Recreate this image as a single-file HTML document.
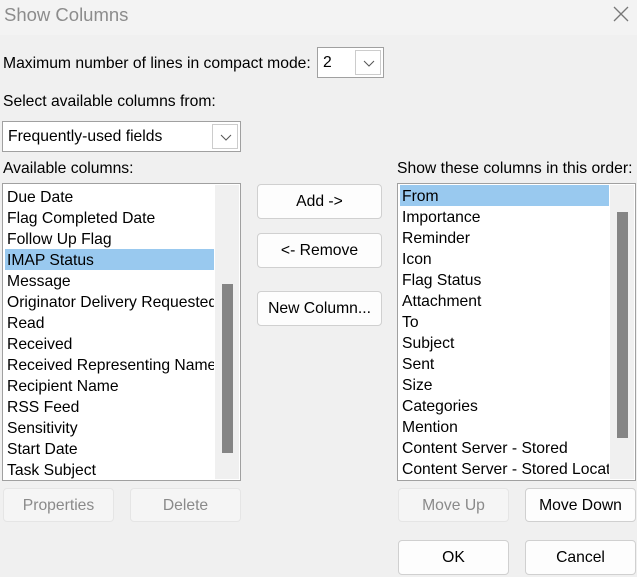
<!DOCTYPE html>
<html><head><style>
*{margin:0;padding:0;box-sizing:border-box}
body{width:637px;height:577px;background:#f0f0f0;font-family:"Liberation Sans",sans-serif;font-size:15.7px;color:#000;position:relative;overflow:hidden}
.a{position:absolute;white-space:nowrap}
.title{position:absolute;left:0;top:0;width:637px;height:35px;background:#f3f3f3}
.box{position:absolute;background:#fff;border:1px solid #a0a0a0}
.dd{position:absolute;top:2px;right:2px;bottom:2px;width:26px;border:1px solid #ccc;background:#fff}
.dd svg{position:absolute;left:7px;top:9px}
.btn{position:absolute;background:#fdfdfd;border:1px solid #d0d0d0;border-radius:4px;text-align:center;line-height:33px;font-size:15.7px}
.dis{background:#f5f5f5;color:#8a8a8a;border-color:#e5e5e5}
.row{position:absolute;left:2px;height:21px;line-height:23px;padding-left:2px;width:209px;overflow:hidden;white-space:nowrap}
.sel{background:#99c9ef}
.sb{position:absolute;top:1px;bottom:1px;width:24px;background:#f0f0f0}
.th{position:absolute;left:7px;width:11px;background:#858585}
</style></head><body>
<div class="title"></div>
<div class="a" style="left:4px;top:4px;font-size:18.5px;color:#8c8c8c">Show Columns</div>
<svg class="a" style="left:613px;top:6px" width="16" height="16"><path d="M1 1L15 15M15 1L1 15" stroke="#777" stroke-width="1.3"/></svg>

<div class="a" style="left:3px;top:55px">Maximum number of lines in compact mode:</div>
<div class="box" style="left:317px;top:47px;width:67px;height:31px"><span class="a" style="left:5px;top:6px">2</span><div class="dd"><svg width="12" height="8"><path d="M1 1L6 6L11 1" stroke="#555" fill="none"/></svg></div></div>

<div class="a" style="left:3px;top:93px">Select available columns from:</div>
<div class="box" style="left:2px;top:121px;width:239px;height:31px"><span class="a" style="left:5px;top:6px">Frequently-used fields</span><div class="dd"><svg width="12" height="8"><path d="M1 1L6 6L11 1" stroke="#555" fill="none"/></svg></div></div>

<div class="a" style="left:3px;top:160px">Available columns:</div>
<div class="a" style="left:397px;top:160px">Show these columns in this order:</div>

<div class="box" style="left:2px;top:183px;width:239px;height:298px;overflow:hidden">
<div class="row" style="top:2px">Due Date</div>
<div class="row" style="top:23px">Flag Completed Date</div>
<div class="row" style="top:44px">Follow Up Flag</div>
<div class="row sel" style="top:65px">IMAP Status</div>
<div class="row" style="top:86px">Message</div>
<div class="row" style="top:107px">Originator Delivery Requested</div>
<div class="row" style="top:128px">Read</div>
<div class="row" style="top:149px">Received</div>
<div class="row" style="top:170px">Received Representing Name</div>
<div class="row" style="top:191px">Recipient Name</div>
<div class="row" style="top:212px">RSS Feed</div>
<div class="row" style="top:233px">Sensitivity</div>
<div class="row" style="top:254px">Start Date</div>
<div class="row" style="top:275px">Task Subject</div>
<div class="sb" style="left:212px"><div class="th" style="top:99px;height:169px"></div></div>
</div>

<div class="box" style="left:397px;top:183px;width:239px;height:298px;overflow:hidden">
<div class="row sel" style="top:1px">From</div>
<div class="row" style="top:22px">Importance</div>
<div class="row" style="top:43px">Reminder</div>
<div class="row" style="top:64px">Icon</div>
<div class="row" style="top:85px">Flag Status</div>
<div class="row" style="top:106px">Attachment</div>
<div class="row" style="top:127px">To</div>
<div class="row" style="top:148px">Subject</div>
<div class="row" style="top:169px">Sent</div>
<div class="row" style="top:190px">Size</div>
<div class="row" style="top:211px">Categories</div>
<div class="row" style="top:232px">Mention</div>
<div class="row" style="top:253px">Content Server - Stored</div>
<div class="row" style="top:274px">Content Server - Stored Location</div>
<div class="sb" style="left:212px"><div class="th" style="top:27px;height:226px"></div></div>
</div>

<div class="btn" style="left:257px;top:184px;width:125px;height:35px">Add -&gt;</div>
<div class="btn" style="left:257px;top:233px;width:125px;height:35px">&lt;- Remove</div>
<div class="btn" style="left:257px;top:291px;width:125px;height:35px">New Column...</div>

<div class="btn dis" style="left:3px;top:488px;width:111px;height:34px">Properties</div>
<div class="btn dis" style="left:130px;top:488px;width:111px;height:34px">Delete</div>
<div class="btn dis" style="left:398px;top:488px;width:111px;height:34px">Move Up</div>
<div class="btn" style="left:525px;top:488px;width:111px;height:34px">Move Down</div>
<div class="btn" style="left:398px;top:540px;width:111px;height:35px">OK</div>
<div class="btn" style="left:525px;top:540px;width:111px;height:35px">Cancel</div>
</body></html>
